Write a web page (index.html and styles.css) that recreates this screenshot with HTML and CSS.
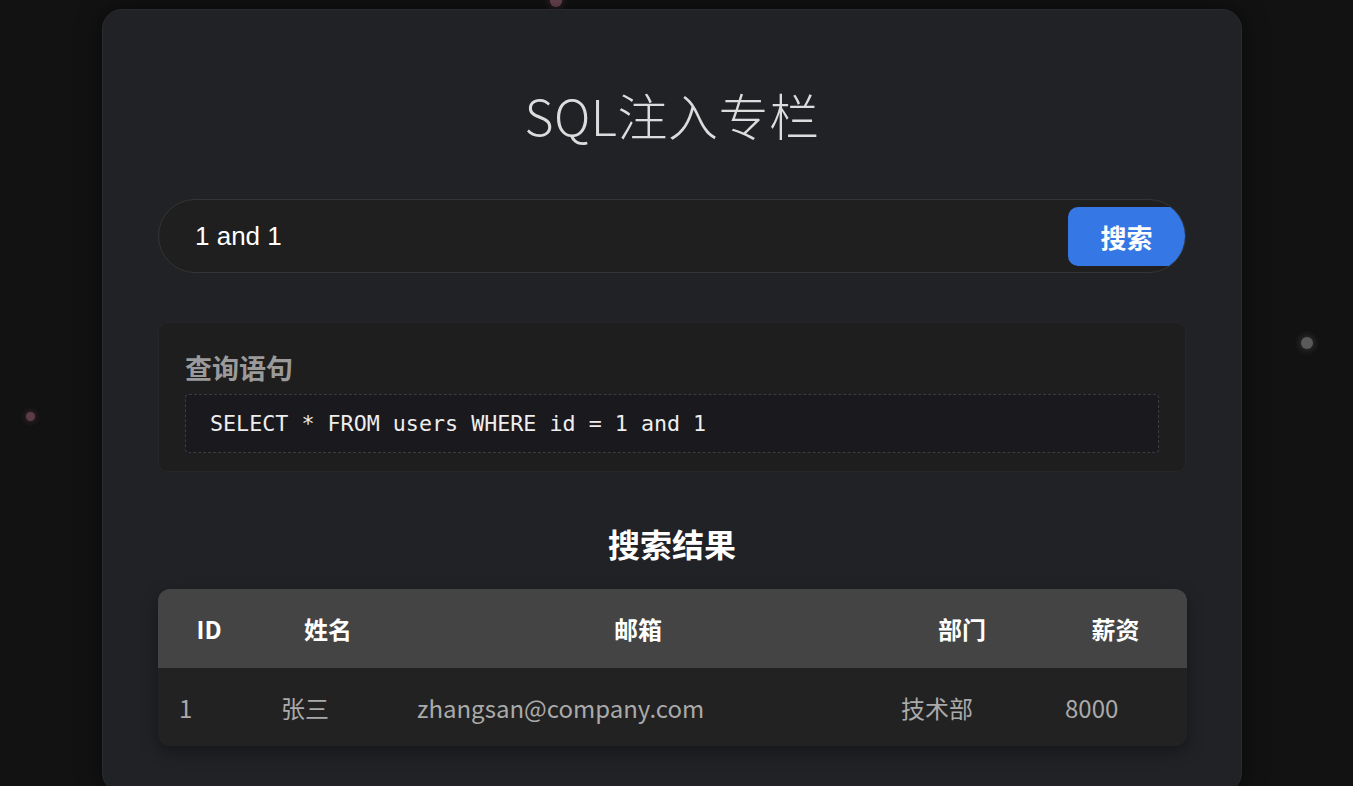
FILE: index.html
```html
<!DOCTYPE html>
<html lang="zh-CN">
<head>
<meta charset="utf-8">
<title>SQL注入专栏</title>
<link rel="stylesheet" href="styles.css">
</head>
<body>
<div class="particle particle-top"></div>
<div class="particle particle-right"></div>
<div class="particle particle-left"></div>
<main class="panel">
  <h1 class="title">SQL注入专栏</h1>
  <form class="search-bar">
    <input class="search-input" type="text" value="1 and 1">
    <button class="search-btn" type="button">搜索</button>
  </form>
  <section class="query-box">
    <h3 class="query-label">查询语句</h3>
    <div class="query-code">SELECT * FROM users WHERE id = 1 and 1</div>
  </section>
  <h2 class="result-title">搜索结果</h2>
  <table class="result-table">
    <colgroup>
      <col class="c-id"><col class="c-name"><col class="c-mail"><col class="c-dept"><col class="c-pay">
    </colgroup>
    <thead>
      <tr><th>ID</th><th>姓名</th><th>邮箱</th><th>部门</th><th>薪资</th></tr>
    </thead>
    <tbody>
      <tr><td>1</td><td>张三</td><td>zhangsan@company.com</td><td>技术部</td><td>8000</td></tr>
    </tbody>
  </table>
</main>
</body>
</html>
```
FILE: styles.css
```css
html, body {
  margin: 0;
  padding: 0;
  height: 100%;
  overflow: hidden;
}
body {
  background: #121212;
  font-family: "Noto Sans CJK SC", "Noto Sans", sans-serif;
  position: relative;
}
.particle {
  position: absolute;
  border-radius: 50%;
  z-index: 0;
}
.particle-top {
  left: 550px;
  top: -5px;
  width: 12px;
  height: 12px;
  background: #6b4654;
  box-shadow: 0 0 6px 2px rgba(120, 70, 90, 0.35);
}
.particle-right {
  left: 1301px;
  top: 337px;
  width: 12px;
  height: 12px;
  background: #5a5a5a;
  box-shadow: 0 0 6px 2px rgba(110, 110, 110, 0.3);
}
.particle-left {
  left: 26px;
  top: 412px;
  width: 9px;
  height: 9px;
  background: #5c3d47;
  box-shadow: 0 0 5px 2px rgba(100, 60, 75, 0.35);
}
.panel {
  position: relative;
  z-index: 1;
  box-sizing: border-box;
  width: 1140px;
  margin: 9px 0 0 102px;
  padding: 74px 55px 46px;
  background: #212226;
  border: 1px solid #2a2b30;
  border-radius: 20px;
  box-shadow: 0 0 24px rgba(0, 0, 0, 0.5);
}
.title {
  margin: 0;
  text-align: center;
  font-size: 50px;
  line-height: 60px;
  letter-spacing: 0.5px;
  font-weight: 300;
  color: #dcdcdc;
}
.search-bar {
  margin: 55px 0 0;
  height: 74px;
  box-sizing: border-box;
  display: flex;
  align-items: center;
  background: #1f1f1f;
  border: 1px solid #353535;
  border-radius: 37px;
  overflow: hidden;
}
.search-input {
  flex: 1;
  min-width: 0;
  border: none;
  outline: none;
  background: transparent;
  color: #ffffff;
  font-family: "Liberation Sans", Arial, sans-serif;
  font-size: 26px;
  padding: 0 0 0 36px;
  height: 100%;
}
.search-btn {
  width: 117px;
  height: 59px;
  margin-top: 1px;
  border: none;
  border-radius: 10px 0 0 10px;
  background: #3578e5;
  color: #ffffff;
  font-family: "Noto Sans CJK SC", sans-serif;
  font-size: 26px;
  font-weight: 700;
  padding: 0;
  cursor: pointer;
}
.query-box {
  margin-top: 49px;
  box-sizing: border-box;
  height: 150px;
  padding: 27px 26px 18px;
  background: #1e1e1e;
  border: 1px solid #262626;
  border-radius: 10px;
}
.query-label {
  margin: 0;
  font-size: 27px;
  line-height: 36px;
  font-weight: 700;
  color: #9a9a9a;
}
.query-code {
  margin-top: 8px;
  box-sizing: border-box;
  height: 59px;
  padding: 0 24px;
  display: flex;
  align-items: center;
  background: #1a1a1e;
  border: 1px dashed #3c3c40;
  border-radius: 4px;
  font-family: "DejaVu Sans Mono", "Liberation Mono", monospace;
  font-size: 21.7px;
  color: #eeeeee;
  white-space: pre;
}
.result-title {
  margin: 48px 0 0;
  text-align: center;
  font-size: 32px;
  line-height: 46px;
  font-weight: 700;
  color: #ffffff;
}
.result-table {
  margin-top: 23px;
  width: 100%;
  table-layout: fixed;
  border-collapse: separate;
  border-spacing: 0;
  border-radius: 12px;
  overflow: hidden;
  box-shadow: 0 6px 16px rgba(0, 0, 0, 0.35);
}
.c-id { width: 102px; }
.c-name { width: 136px; }
.c-mail { width: 484px; }
.c-dept { width: 164px; }
.c-pay { width: 143px; }
.result-table th {
  background: #444444;
  color: #ffffff;
  font-size: 24px;
  font-weight: 700;
  text-align: center;
  height: 79px;
  padding: 0 21px;
  box-sizing: border-box;
}
.result-table td {
  background: #222222;
  color: #aaaaaa;
  font-size: 24px;
  text-align: left;
  height: 78px;
  padding: 0 21px;
  box-sizing: border-box;
  white-space: nowrap;
}
```
